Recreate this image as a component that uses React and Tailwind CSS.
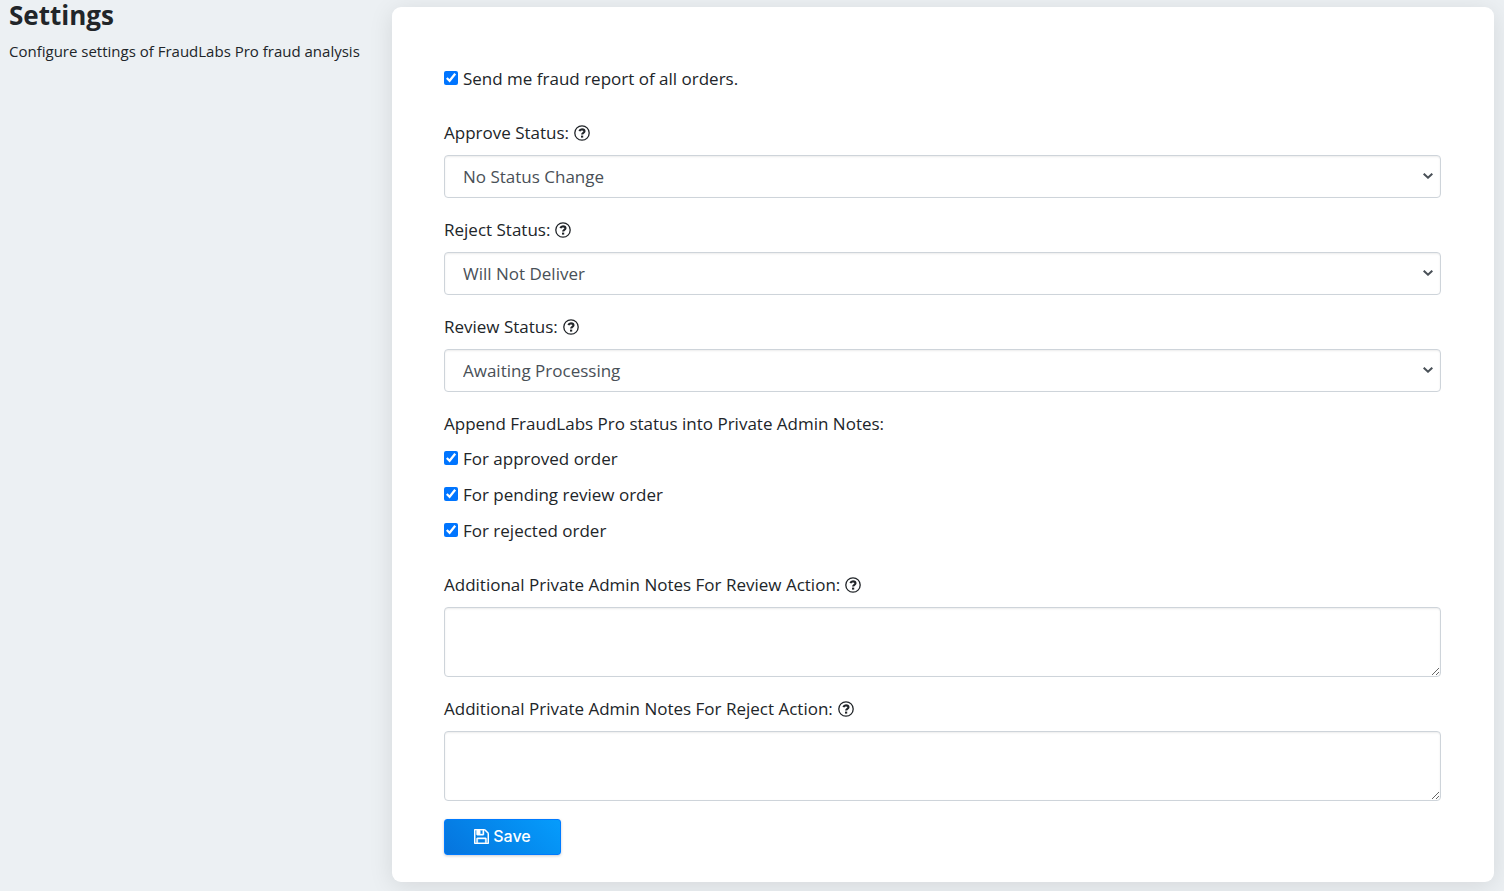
import { useState } from "react";

const HelpIcon = () => (
  <svg
    viewBox="0 0 16 16"
    className="size-4 shrink-0"
    fill="none"
    stroke="currentColor"
    aria-hidden="true"
  >
    <circle cx="8" cy="8" r="7.200" strokeWidth="1.300" />
    <path
      d="M5.400 6.200C5.800 5 6.700 4.400 8 4.400c1.500 0 2.500.8 2.500 1.900 0 1.700-2.400 1.500-2.400 3.300"
      strokeWidth="2.100"
    />
    <path d="M8.100 10.600v2" strokeWidth="2.200" />
  </svg>
);

const SaveIcon = () => (
  <svg
    viewBox="128 128 1536 1536"
    className="size-[15px]"
    fill="currentColor"
    stroke="currentColor"
    strokeWidth="40"
    aria-hidden="true"
  >
    <path d="M512 1536h768v-384h-768v384zm896 0h128v-896q0-14-10-38.5t-20-34.5l-281-281q-10-10-34-20t-39-10v416q0 40-28 68t-68 28h-576q-40 0-68-28t-28-68v-416h-128v1280h128v-416q0-40 28-68t68-28h832q40 0 68 28t28 68v416zm-384-928v-320q0-13-9.5-22.5t-22.5-9.5h-192q-13 0-22.5 9.5t-9.5 22.5v320q0 13 9.5 22.5t22.5 9.5h192q13 0 22.5-9.5t9.5-22.5zm640 32v928q0 40-28 68t-68 28h-1344q-40 0-68-28t-28-68v-1344q0-40 28-68t68-28h928q40 0 88 20t76 48l280 280q28 28 48 76t20 88z" />
  </svg>
);

const FieldLabel = ({ id, children }) => (
  <label
    htmlFor={id}
    className="mb-[9px] flex items-center gap-[5px]"
  >
    {children}
    <HelpIcon />
  </label>
);

const CheckField = ({ id, children }) => {
  const [checked, setChecked] = useState(true);

  return (
    <div className="flex items-center gap-[5px]">
      <input
        id={id}
        type="checkbox"
        checked={checked}
        onChange={(e) => setChecked(e.target.checked)}
        className="mb-0.5 size-[14px] accent-[#0075ff]"
      />
      <label htmlFor={id}>{children}</label>
    </div>
  );
};

const statuses = [
  "No Status Change",
  "Awaiting Processing",
  "Will Not Deliver",
];

const SelectField = ({ id, label, value }) => (
  <div className="mb-[18px]">
    <FieldLabel id={id}>{label}</FieldLabel>
    <div className="relative">
      <select
        id={id}
        defaultValue={value}
        className="block h-[43px] w-full appearance-none rounded border border-[#ced4da] bg-white pr-8 pl-[18px] text-[#495057] shadow-[inset_0_1px_2px_rgba(0,0,0,0.08)]"
      >
        {statuses.map((status) => (
          <option key={status}>{status}</option>
        ))}
      </select>
      <svg
        viewBox="0 0 10 6"
        className="pointer-events-none absolute top-[18px] right-2 h-[6px] w-[10px]"
        fill="none"
        stroke="#495057"
        strokeWidth="2"
        aria-hidden="true"
      >
        <path d="M0.700 0.700L5 4.700L9.300 0.700" />
      </svg>
    </div>
  </div>
);

const NotesField = ({ id, label }) => (
  <div className="mb-[18px]">
    <FieldLabel id={id}>{label}</FieldLabel>
    <textarea
      id={id}
      className="block h-[70px] w-full resize-y rounded border border-[#ced4da] bg-white px-[18px] py-2 text-[#495057] shadow-[inset_0_1px_2px_rgba(0,0,0,0.08)]"
    />
  </div>
);

const App = () => {
  return (
    <div className="flex min-h-screen items-start bg-[#ecf0f3] pr-[10px] pl-[9px] font-['Open_Sans','Noto_Sans',sans-serif] text-[#212529]">
      <header className="w-[383px] shrink-0">
        <h1 className="text-[26px] leading-[31px] font-bold">Settings</h1>
        <p className="mt-2 text-[15px] leading-6">
          Configure settings of FraudLabs Pro fraud analysis
        </p>
      </header>

      <main className="mt-[7px] min-w-0 flex-1 rounded-[9px] bg-white pt-[58px] pr-[53px] pb-[27px] pl-[52px] shadow-[0_4px_24px_rgba(0,0,0,0.1)]">
        <form
          className="text-[17px] leading-[27px]"
          onSubmit={(e) => e.preventDefault()}
        >
          <div className="mb-[27px]">
            <CheckField id="send-report">
              Send me fraud report of all orders.
            </CheckField>
          </div>

          <SelectField
            id="approve-status"
            label="Approve Status:"
            value="No Status Change"
          />
          <SelectField
            id="reject-status"
            label="Reject Status:"
            value="Will Not Deliver"
          />
          <SelectField
            id="review-status"
            label="Review Status:"
            value="Awaiting Processing"
          />

          <fieldset className="mb-[27px]">
            <legend className="mb-2">
              Append FraudLabs Pro status into Private Admin Notes:
            </legend>
            <div className="space-y-[9px]">
              <CheckField id="note-approved">For approved order</CheckField>
              <CheckField id="note-review">For pending review order</CheckField>
              <CheckField id="note-rejected">For rejected order</CheckField>
            </div>
          </fieldset>

          <NotesField
            id="review-notes"
            label="Additional Private Admin Notes For Review Action:"
          />
          <NotesField
            id="reject-notes"
            label="Additional Private Admin Notes For Reject Action:"
          />

          <button
            type="submit"
            className="flex h-9 w-[117px] items-center justify-center gap-1 rounded-[3px] border border-[#007bff] bg-linear-45 from-[#0674dd] to-[#069cfc] pb-0.5 font-['Inter',sans-serif] text-[16px] font-medium text-white shadow-[0_1px_3px_rgba(0,0,0,0.2)]"
          >
            <SaveIcon />
            Save
          </button>
        </form>
      </main>
    </div>
  );
};

export default App;
